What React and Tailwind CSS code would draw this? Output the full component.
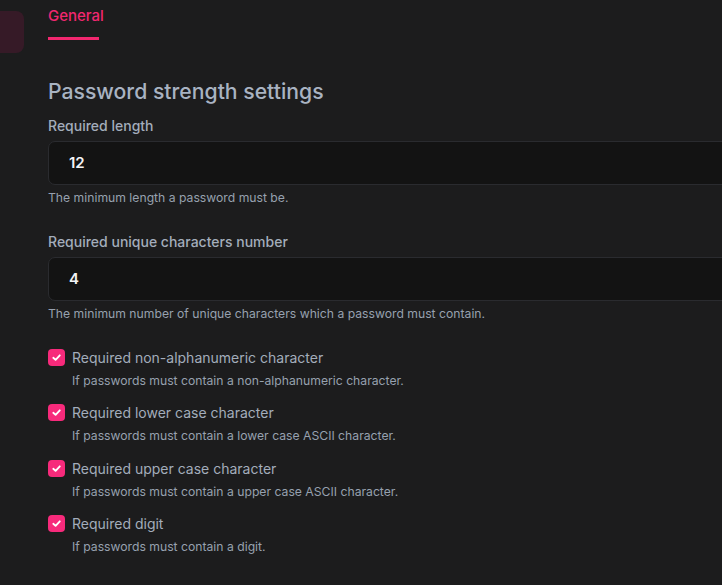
import React from "react";

const font = { fontFamily: "Inter, 'Noto Sans', sans-serif" };

function Check() {
  return (
    <div className="w-[17px] h-[17px] rounded-[4px] bg-[#f72a7b] flex items-center justify-center shrink-0">
      <svg width="11" height="11" viewBox="0 0 12 12" fill="none">
        <path d="M2.5 6.3 L5 8.6 L9.6 3.6" stroke="white" strokeWidth="2" strokeLinecap="round" strokeLinejoin="round" />
      </svg>
    </div>
  );
}

function Field({ label, value, help }) {
  return (
    <div className="flex flex-col">
      <div className="text-[14px] leading-[20px] font-medium text-[#a3adbb]">{label}</div>
      <div className="mt-[5px] h-[44px] w-[760px] rounded-[7px] bg-[#131313] border border-[#2a2b2f] flex items-center pl-[20px]">
        <span className="text-[15px] font-semibold text-[#f3f4f6]">{value}</span>
      </div>
      <div className="mt-[5px] text-[12.2px] leading-[16px] text-[#97a1af]">{help}</div>
    </div>
  );
}

function CheckRow({ label, help }) {
  return (
    <div className="flex gap-[7px] h-[55.4px]">
      <div className="pt-[1px]"><Check /></div>
      <div className="flex flex-col">
        <div className="text-[14px] leading-[20px] text-[#a3adbb]">{label}</div>
        <div className="mt-[5px] text-[12.2px] leading-[16px] text-[#97a1af]">{help}</div>
      </div>
    </div>
  );
}

export default function App() {
  return (
    <div className="w-[722px] h-[585px] overflow-hidden bg-[#1c1c1d] flex" style={font}>
      <div className="w-[48px] shrink-0 pt-[11px]">
        <div className="w-[24px] h-[42px] rounded-r-[8px] bg-[#361a27]" />
      </div>
      <div className="w-[800px] shrink-0 flex flex-col">
        <div className="pt-[6px] flex">
          <div className="flex flex-col">
            <div className="text-[15px] leading-[20px] text-[#f2276f] font-medium">General</div>
            <div className="mt-[11px] h-[3px] w-[51px] bg-[#f2276f]" />
          </div>
        </div>
        <div className="mt-[37px] text-[21.2px] leading-[28px] font-medium text-[#a9b3c2]">Password strength settings</div>
        <div className="mt-[11px] flex flex-col gap-[26px]">
          <Field label="Required length" value="12" help="The minimum length a password must be." />
          <Field label="Required unique characters number" value="4" help="The minimum number of unique characters which a password must contain." />
        </div>
        <div className="mt-[26px] flex flex-col">
          <CheckRow label="Required non-alphanumeric character" help="If passwords must contain a non-alphanumeric character." />
          <CheckRow label="Required lower case character" help="If passwords must contain a lower case ASCII character." />
          <CheckRow label="Required upper case character" help="If passwords must contain a upper case ASCII character." />
          <CheckRow label="Required digit" help="If passwords must contain a digit." />
        </div>
      </div>
    </div>
  );
}
